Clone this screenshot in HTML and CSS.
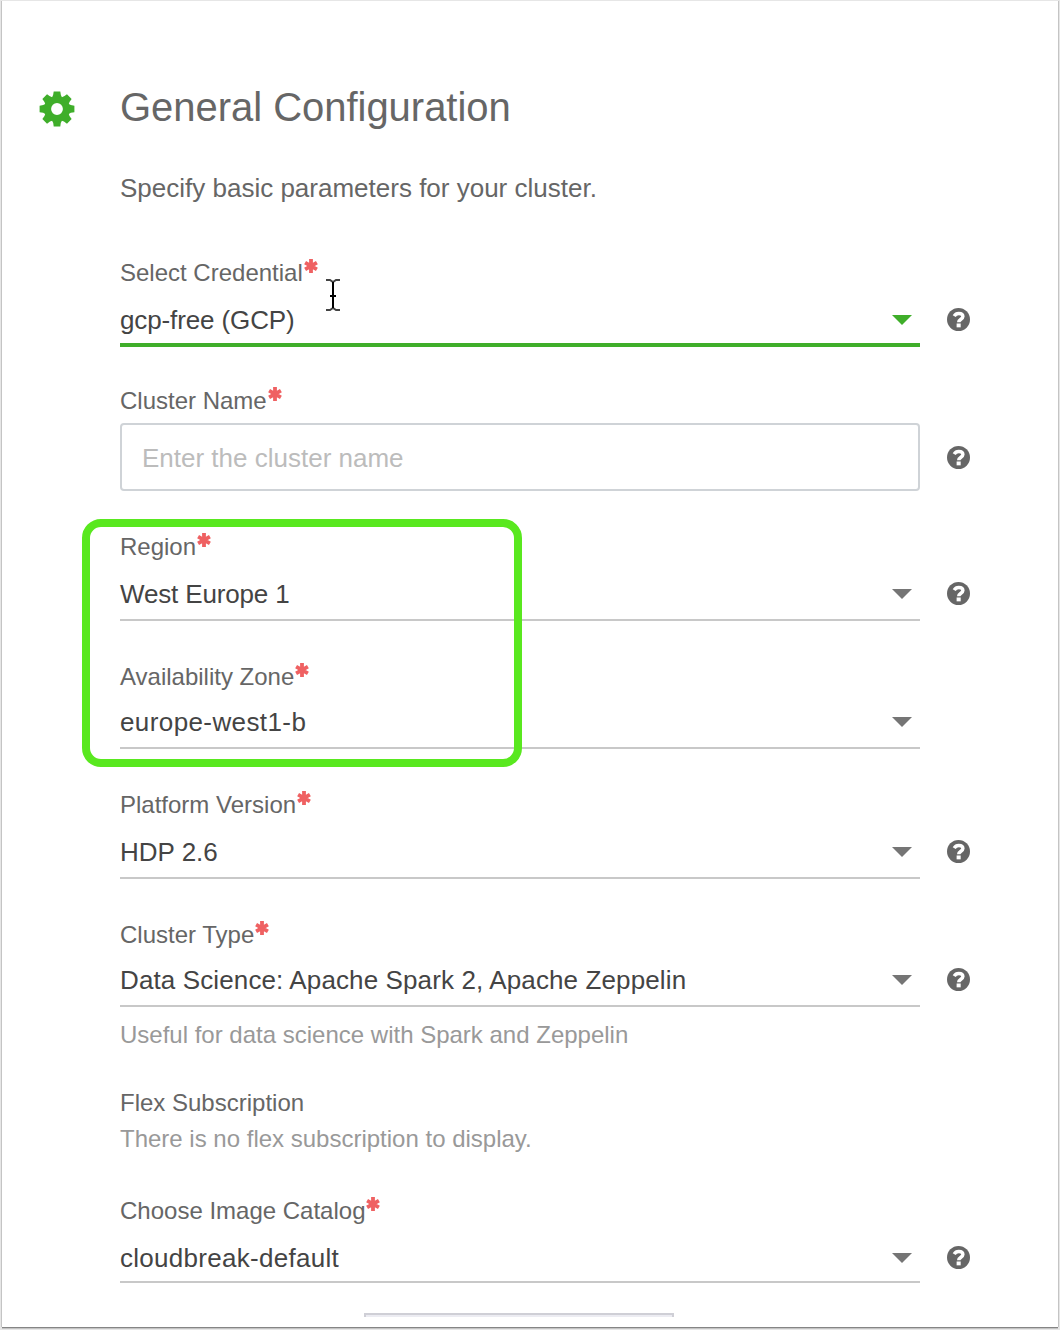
FILE: index.html
```
<!DOCTYPE html>
<html lang="en">
<head>
  <meta charset="UTF-8">
  <meta name="viewport" content="width=device-width, initial-scale=1.0">
  <title>Create Cluster</title>
  <link rel="stylesheet" href="styles.css">
</head>
<body>
  <svg class="sprite">
    <symbol id="gear" viewBox="-18 -18 36 36">
      <path id="tooth" d="M-4.9 -11.8 Q-3.7 -13 -3.3 -17.4 H3.3 Q3.7 -13 4.9 -11.8 V-8 H-4.9z M-4.9 11.8 Q-3.7 13 -3.3 17.4 H3.3 Q3.7 13 4.9 11.8 V8 H-4.9z"/>
      <use href="#tooth" transform="rotate(45)"/>
      <use href="#tooth" transform="rotate(90)"/>
      <use href="#tooth" transform="rotate(135)"/>
      <circle r="9.2" fill="none" stroke="currentColor" stroke-width="6.6"/>
    </symbol>
    <symbol id="help" viewBox="0 0 22 22">
      <circle cx="11" cy="11" r="11"/>
      <path d="M6.9 7.7 C8 5.8 9.4 5.2 11.2 5.2 C13.6 5.2 15.2 6.4 15.2 8.2 C15.2 10.8 11.2 10.7 11.2 13.7" fill="none" stroke="#fff" stroke-width="3.3"/>
      <path d="M9.2 14.8 h3.9 v3.7 h-3.9z" fill="#fff"/>
    </symbol>
    <symbol id="required" viewBox="-7 -7 14 14">
      <path d="M0 -6.9 V6.9 M-5.9 -3.4 L5.9 3.4 M-5.9 3.4 L5.9 -3.4" stroke="currentColor" stroke-width="3.8"/>
    </symbol>
  </svg>

  <div class="card">
    <div class="heading">
      <svg class="gear"><use href="#gear"/></svg>
      <h1>General Configuration</h1>
    </div>
    <p class="intro">Specify basic parameters for your cluster.</p>

    <form class="form">
      <div class="field field--credential">
        <label>Select Credential<svg class="required"><use href="#required"/></svg></label>
        <div class="row">
          <div class="select select--active"><span>gcp-free (GCP)</span></div>
          <svg class="help"><use href="#help"/></svg>
        </div>
        <svg class="cursor" viewBox="0 0 14 32">
          <path d="M0 1 H4 L7 3 L10 1 H14 M0 31 H4 L7 29 L10 31 H14" fill="none" stroke="#444" stroke-width="2"/>
          <path d="M7 3 V29 M4 17 H10" stroke="#000" stroke-width="2"/>
        </svg>
      </div>

      <div class="field field--name">
        <label>Cluster Name<svg class="required"><use href="#required"/></svg></label>
        <div class="row row--input">
          <input type="text" placeholder="Enter the cluster name">
          <svg class="help"><use href="#help"/></svg>
        </div>
      </div>

      <div class="field field--region">
        <label>Region<svg class="required"><use href="#required"/></svg></label>
        <div class="row">
          <div class="select"><span>West Europe 1</span></div>
          <svg class="help"><use href="#help"/></svg>
        </div>
        <div class="highlight"></div>
      </div>

      <div class="field field--compact field--zone">
        <label>Availability Zone<svg class="required"><use href="#required"/></svg></label>
        <div class="row">
          <div class="select"><span>europe-west1-b</span></div>
        </div>
      </div>

      <div class="field">
        <label>Platform Version<svg class="required"><use href="#required"/></svg></label>
        <div class="row">
          <div class="select"><span>HDP 2.6</span></div>
          <svg class="help"><use href="#help"/></svg>
        </div>
      </div>

      <div class="field field--compact field--type">
        <label>Cluster Type<svg class="required"><use href="#required"/></svg></label>
        <div class="row">
          <div class="select"><span>Data Science: Apache Spark 2, Apache Zeppelin</span></div>
          <svg class="help"><use href="#help"/></svg>
        </div>
        <p class="hint">Useful for data science with Spark and Zeppelin</p>
      </div>

      <div class="field field--flex">
        <label>Flex Subscription</label>
        <p class="empty">There is no flex subscription to display.</p>
      </div>

      <div class="field field--catalog">
        <label>Choose Image Catalog<svg class="required"><use href="#required"/></svg></label>
        <div class="row">
          <div class="select"><span>cloudbreak-default</span></div>
          <svg class="help"><use href="#help"/></svg>
        </div>
      </div>
    </form>
    <div class="next-panel"></div>
  </div>
</body>
</html>
```
FILE: styles.css
```
* {
  margin: 0;
  box-sizing: border-box;
}

body {
  height: 1330px;
  padding: 1px 2px 3px;
  overflow: hidden;
  background-color: #e6e6e6;
  font-family: "Liberation Sans", Arial, sans-serif;
  color: #666;
}

.sprite {
  display: block;
  width: 0;
  height: 0;
}

.card {
  height: 1326px;
  padding: 79px 0 0 118px;
  background-color: #fff;
  box-shadow: 0 1px 0 0 #858585, 1px 0 0 0 #c4c4c4, -1px 0 0 0 #c4c4c4, 0 2px 0 0 #c4c4c4;
}

.heading {
  display: flex;
  align-items: center;
  height: 54px;
  margin-left: -81px;
}

.gear {
  width: 36px;
  height: 36px;
  margin: 3px 45px 0 0;
  color: #3fae2a;
  fill: #3fae2a;
}

h1 {
  font-size: 40px;
  font-weight: 400;
  letter-spacing: -0.03px;
}

.intro {
  margin-top: 38px;
  font-size: 26px;
  line-height: 32px;
}

.form {
  display: flex;
  flex-direction: column;
  gap: 40px;
  margin-top: 53px;
}

.field {
  position: relative;
}

label {
  display: flex;
  height: 32px;
  font-size: 24px;
  line-height: 32px;
}

.required {
  width: 14px;
  height: 14px;
  margin: 2px 0 0 1px;
  color: #ef6162;
}

.row {
  display: flex;
  align-items: flex-end;
}

.select {
  display: flex;
  align-items: center;
  justify-content: space-between;
  width: 800px;
  height: 58px;
  padding: 15px 8px 9px 0;
  border-bottom: 2px solid #c8c8c8;
  color: #444;
  font-size: 26px;
  line-height: 32px;
}

.select::after {
  content: "";
  border: 10px solid transparent;
  border-top-color: #757575;
  border-bottom: 0;
}

.select--active {
  padding-bottom: 7px;
  border-bottom: 4px solid #3fae2a;
}

.select--active::after {
  border-top-color: #3fae2a;
}

.help {
  width: 23px;
  height: 23px;
  margin: 0 0 16px 27px;
  fill: #666;
}

.cursor {
  position: absolute;
  top: 22px;
  left: 206px;
  width: 14px;
  height: 32px;
}

.field--credential span {
  letter-spacing: -0.12px;
}

.field--name {
  margin-top: -2px;
}

.row--input {
  align-items: center;
  padding-top: 6px;
}

.row--input .help {
  margin-bottom: 0;
}

input {
  width: 800px;
  height: 68px;
  padding: 2px 20px 0;
  border: 2px solid #cfd3d7;
  border-radius: 4px;
  background-color: #fff;
  font-family: inherit;
  font-size: 26px;
}

input::placeholder {
  color: #bcbcbc;
}

.field--region span {
  letter-spacing: -0.15px;
}

.highlight {
  position: absolute;
  z-index: 1;
  top: -12px;
  left: -38px;
  width: 440px;
  height: 248px;
  border: 8px solid #59e81f;
  border-radius: 19px;
}

.field--compact .select,
.field--catalog .select {
  height: 56px;
}

.field--compact .select {
  padding-top: 13px;
}

.field--zone span {
  letter-spacing: 0.4px;
}

.field--type span {
  letter-spacing: 0.12px;
}

.hint,
.empty {
  color: #999;
  font-size: 24px;
  line-height: 32px;
}

.hint {
  margin-top: 12px;
}

.field--flex {
  margin-top: -4px;
}

.empty {
  margin-top: 4px;
}

.field--catalog .select {
  padding-bottom: 7px;
}

.field--catalog span {
  letter-spacing: 0.28px;
}

.field--catalog .help {
  margin-bottom: 14px;
}

.next-panel {
  width: 310px;
  height: 4px;
  margin: 30px 0 0 244px;
  border: 2px solid #cfcfd6;
  border-bottom: 0;
  background-color: #ececf2;
}
```
